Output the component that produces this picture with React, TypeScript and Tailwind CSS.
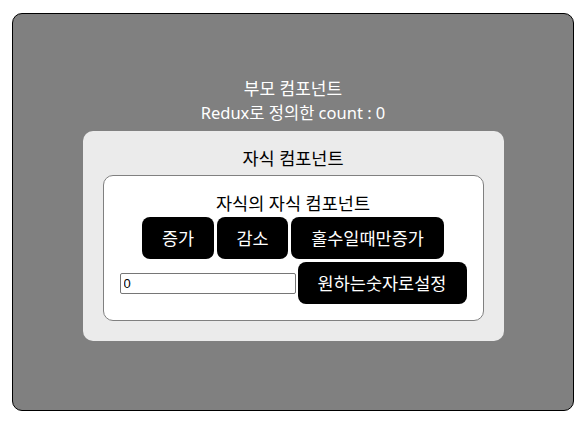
import React from "react";

export default function App() {
  const font = { fontFamily: '"Noto Sans", "Noto Sans CJK KR", sans-serif' };
  const btn =
    "bg-black text-white rounded-[8px] h-[42px] text-[17.5px] leading-[24px] flex items-center justify-center";
  return (
    <div className="w-[587px] h-[424px] bg-white pt-[13px] pl-[12px]" style={font}>
      <div className="w-[562px] h-[398px] border border-black rounded-[10px] bg-[#808080] flex flex-col items-center pt-[63px]">
        <div className="text-white text-[17px] leading-[24px] text-center">부모 컴포넌트</div>
        <div className="text-white text-[16.5px] leading-[24px] text-center">Redux로 정의한 count : 0</div>
        <div className="mt-[6px] w-[421px] bg-[#ebebeb] rounded-[10px] pt-[15px] px-[20px] pb-[20px] flex flex-col items-center">
          <div className="text-black text-[17.5px] leading-[24px]">자식 컴포넌트</div>
          <div className="mt-[5px] w-[381px] bg-white border border-[#808080] rounded-[10px] pt-[15px] pb-[16px] flex flex-col items-center">
            <div className="text-black text-[17.5px] leading-[24px]">자식의 자식 컴포넌트</div>
            <div className="mt-[2px] flex gap-[3px]">
              <button className={btn + " w-[72px]"}>증가</button>
              <button className={btn + " w-[71px]"}>감소</button>
              <button className={btn + " w-[153px]"}>홀수일때만증가</button>
            </div>
            <div className="mt-[3px] flex items-center gap-[2px]">
              <input
                defaultValue="0"
                className="w-[176px] h-[21px] border border-[#767676] rounded-[2px] px-[3px] text-[13px] text-black bg-white"
                style={{ fontFamily: '"Liberation Sans", Arial, sans-serif' }}
              />
              <button className={btn + " w-[169px]"}>원하는숫자로설정</button>
            </div>
          </div>
        </div>
      </div>
    </div>
  );
}
